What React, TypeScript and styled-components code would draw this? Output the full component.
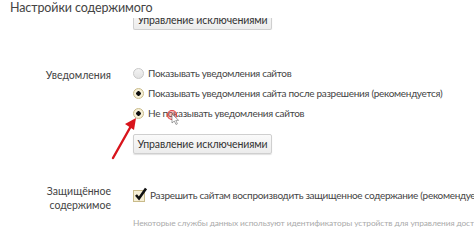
import * as React from 'react';
import styled, { createGlobalStyle } from 'styled-components';

const GlobalStyle = createGlobalStyle`
  html, body {
    margin: 0;
    padding: 0;
    background: #fff;
    overflow: hidden;
  }
  body {
    font-family: Lato, 'Open Sans', Arial, sans-serif;
    color: #333;
  }
`;

const Page = styled.div`
  position: relative;
  width: 474px;
  height: 249px;
  overflow: hidden;
`;

const Title = styled.div`
  padding: 1px 0 0 10px;
  height: 17px;
  font-size: 12.5px;
  line-height: 14px;
  color: #444;
  letter-spacing: -0.1px;
`;

const Row = styled.div<{ $top?: number }>`
  display: grid;
  grid-template-columns: 111px 1fr;
  column-gap: 22px;
  margin-top: ${(p) => p.$top ?? 0}px;
`;

const Label = styled.div<{ $shift?: number }>`
  text-align: right;
  font-size: 10.5px;
  line-height: 14px;
  color: #444;
  padding-top: 1px;
  margin-top: ${(p) => p.$shift ?? 0}px;
`;

const Options = styled.div`
  display: flex;
  flex-direction: column;
  align-items: flex-start;
  gap: 7px;
  min-width: 0;
`;

const Option = styled.div`
  display: flex;
  align-items: center;
  gap: 4px;
  font-size: 10px;
  line-height: 13px;
  color: #444;
  white-space: nowrap;
  letter-spacing: -0.3px;
`;

const Radio = styled.span<{ $checked?: boolean }>`
  position: relative;
  flex: none;
  width: 9px;
  height: 9px;
  border-radius: 50%;
  border: 1px solid ${(p) => (p.$checked ? '#c9bb8a' : '#c8c8c8')};
  background: ${(p) =>
    p.$checked
      ? 'radial-gradient(circle, #111 0 2px, #f6efd6 2.5px)'
      : 'linear-gradient(#f3f3f3, #e2e2e2)'};
`;

const Check = styled.span`
  position: relative;
  flex: none;
  width: 10px;
  height: 10px;
  border: 1px solid #c9bb8a;
  background: #f6efd6;
  margin-right: 1px;
`;

const CheckMark = styled.svg`
  position: absolute;
  left: 0;
  top: -4px;
`;

const Button = styled.div<{ $gap?: number }>`
  box-sizing: border-box;
  width: 139px;
  height: 20px;
  margin-top: ${(p) => p.$gap ?? 0}px;
  border: 1px solid #cfcfcf;
  border-radius: 2px;
  background: linear-gradient(#fafafa, #ececec);
  box-shadow: 0 1px 1px rgba(0, 0, 0, 0.12);
  font-size: 10.5px;
  line-height: 18px;
  color: #333;
  text-align: center;
  white-space: nowrap;
  letter-spacing: -0.1px;
`;

const ClippedTop = styled.div`
  height: 12px;
  overflow: hidden;
  display: flex;
  flex-direction: column;
  justify-content: flex-end;
`;

const Note = styled.div`
  font-size: 8.4px;
  line-height: 12px;
  color: #aaa;
  white-space: nowrap;
  margin-top: 15px;
  letter-spacing: -0.1px;
`;

const Overlay = styled.svg`
  position: absolute;
  left: 0;
  top: 0;
  pointer-events: none;
`;

const App = () => {
  return (
    <Page>
      <GlobalStyle />
      <Title>Настройки содержимого</Title>
      <Row>
        <div />
        <ClippedTop>
          <Button>Управление исключениями</Button>
        </ClippedTop>
      </Row>
      <Row $top={37}>
        <Label>Уведомления</Label>
        <Options>
          <Option>
            <Radio />
            Показывать уведомления сайтов
          </Option>
          <Option>
            <Radio $checked />
            Показывать уведомления сайта после разрешения (рекомендуется)
          </Option>
          <Option>
            <Radio $checked />
            Не показывать уведомления сайтов
          </Option>
          <Button $gap={7}>Управление исключениями</Button>
        </Options>
      </Row>
      <Row $top={35}>
        <Label $shift={-6}>
          Защищённое
          <br />
          содержимое
        </Label>
        <div>
          <Option>
            <Check>
              <CheckMark width="14" height="14" viewBox="0 0 14 14">
                <path d="M2 8 L5 11.5 L12 1.5" fill="none" stroke="#111" strokeWidth="2.6" />
              </CheckMark>
            </Check>
            Разрешить сайтам воспроизводить защищенное содержание (рекомендуется)
          </Option>
          <Note>
            Некоторые службы данных используют идентификаторы устройств для управления доступом к контенту
          </Note>
        </div>
      </Row>
      <Overlay width="474" height="249" viewBox="0 0 474 249">
        <line x1="113" y1="158" x2="131" y2="126" stroke="#d8141c" strokeWidth="2.4" strokeLinecap="round" />
        <polygon points="136,118 125,124 134,130" fill="#d8141c" />
        <circle cx="172" cy="115" r="4.5" fill="rgba(230,80,80,0.35)" stroke="#e04848" strokeWidth="1.2" />
        <path d="M172 114 L172 123 L174.3 121 L176 124.5 L177.4 123.8 L175.8 120.4 L178.6 120.3 Z" fill="#fff" stroke="#666" strokeWidth="0.6" />
      </Overlay>
    </Page>
  );
};

export default App;
